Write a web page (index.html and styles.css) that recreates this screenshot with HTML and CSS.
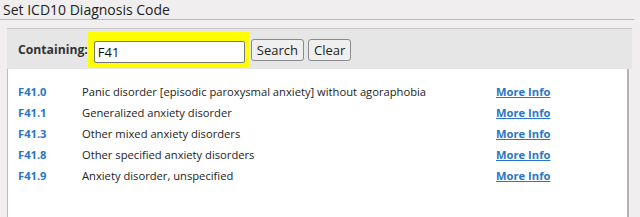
FILE: index.html
```html
<!DOCTYPE html>
<html>
<head>
<meta charset="utf-8">
<link rel="stylesheet" href="styles.css">
</head>
<body>
<div class="title">Set ICD10 Diagnosis Code</div>
<div class="panel">
  <div class="panel-head">
    <label class="lbl" for="q">Containing:</label>
    <span class="hl"><input id="q" class="inp" type="text" value="F41"></span>
    <button class="btn">Search</button>
    <button class="btn">Clear</button>
  </div>
  <div class="panel-body">
    <div class="row"><a class="code" href="#">F41.0</a><span class="desc">Panic disorder [episodic paroxysmal anxiety] without agoraphobia</span><a class="more" href="#">More Info</a></div>
    <div class="row"><a class="code" href="#">F41.1</a><span class="desc">Generalized anxiety disorder</span><a class="more" href="#">More Info</a></div>
    <div class="row"><a class="code" href="#">F41.3</a><span class="desc">Other mixed anxiety disorders</span><a class="more" href="#">More Info</a></div>
    <div class="row"><a class="code" href="#">F41.8</a><span class="desc">Other specified anxiety disorders</span><a class="more" href="#">More Info</a></div>
    <div class="row"><a class="code" href="#">F41.9</a><span class="desc">Anxiety disorder, unspecified</span><a class="more" href="#">More Info</a></div>
  </div>
</div>
</body>
</html>
```
FILE: styles.css
```css
html, body {
  margin: 0;
  padding: 0;
  background: #f0eeef;
  font-family: "Open Sans", "Noto Sans", sans-serif;
  color: #222;
  height: 217px;
  overflow: hidden;
}
.title {
  width: 634px;
  padding-left: 3px;
  height: 20px;
  line-height: 19px;
  font-size: 14px;
  color: #222;
  border-bottom: 1px solid #b9b9b9;
  box-sizing: border-box;
}
.panel {
  margin: 8px 0 0 7px;
  width: 625px;
}
.panel-head {
  background: #e6e6e6;
  border-top: 1px solid #c8c8c8;
  height: 41px;
  display: flex;
  align-items: center;
  padding-left: 11px;
  box-sizing: border-box;
}
.lbl {
  font-weight: 700;
  font-size: 12.2px;
  color: #333;
}
.hl {
  display: inline-block;
  background: #ffff00;
  padding: 9px 4px 5px 6px;
  margin-left: 0;
  margin-top: 1px;
  line-height: 0;
}
.inp {
  width: 151px;
  height: 22px;
  box-sizing: border-box;
  border: 1px solid #777;
  border-radius: 2px;
  padding: 0 3px;
  font-family: "Open Sans", "Noto Sans", sans-serif;
  font-size: 13px;
  color: #111;
  background: #fff;
  margin: 0;
}
.btn {
  height: 22px;
  margin: 2px 0 0 2px;
  padding: 0 5px;
  font-family: "Open Sans", "Noto Sans", sans-serif;
  font-size: 13px;
  color: #222;
  background: #efefef;
  border: 1px solid #8a8a8a;
  border-radius: 3px;
}
.btn + .btn {
  margin-left: 4px;
}
.panel-body {
  width: 622px;
  box-sizing: border-box;
  background: #fff;
  border-left: 1px solid #bdbdbd;
  border-right: 2px solid #b3b3b3;
  height: 148px;
  padding: 12px 0 0 10px;
}
.row {
  display: grid;
  grid-template-columns: 64px 414px auto;
  height: 21px;
  align-items: center;
  font-size: 11.2px;
}
.code {
  color: #2a76c6;
  font-weight: 700;
  text-decoration: none;
}
.desc {
  color: #222;
}
.more {
  color: #2a76c6;
  font-weight: 700;
  text-decoration: underline;
}
```
